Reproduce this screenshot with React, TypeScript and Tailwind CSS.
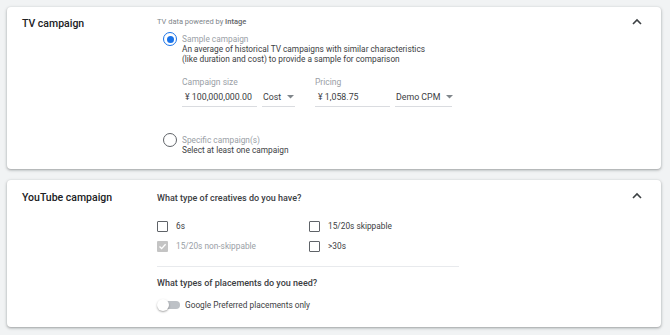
import React from 'react';

const font = { fontFamily: 'Roboto, "Liberation Sans", sans-serif' };

function ChevronUp() {
  return (
    <svg width="10" height="7" viewBox="0 0 10 7" className="mt-[1px]">
      <path d="M1 6 L5 2 L9 6" fill="none" stroke="#3c4043" strokeWidth="1.6" />
    </svg>
  );
}

function Radio({ checked }: { checked?: boolean }) {
  return (
    <span
      className={
        'flex h-[14px] w-[14px] shrink-0 items-center justify-center rounded-full border-[1.5px] ' +
        (checked ? 'border-[#1a73e8]' : 'border-[#5f6368]')
      }
    >
      {checked && <span className="h-[7px] w-[7px] rounded-full bg-[#1a73e8]" />}
    </span>
  );
}

function Caret() {
  return (
    <svg width="7" height="4" viewBox="0 0 7 4" className="shrink-0">
      <path d="M0 0 L7 0 L3.5 3.5 Z" fill="#80868b" />
    </svg>
  );
}

function Field({ value, width }: { value: string; width: string }) {
  return (
    <div className={'whitespace-nowrap border-b border-[#dadce0] pb-[4px] pl-[3px] text-[8.8px] leading-[10px] text-[#3c4043] ' + width}>
      {value}
    </div>
  );
}

function Select({ value, width }: { value: string; width: string }) {
  return (
    <div
      className={
        'flex items-center gap-[6px] whitespace-nowrap border-b border-[#dadce0] pb-[4px] pl-[1px] text-[8.8px] leading-[10px] text-[#3c4043] ' +
        width
      }
    >
      <span>{value}</span>
      <Caret />
    </div>
  );
}

function Checkbox({ label, checked, disabled }: { label: string; checked?: boolean; disabled?: boolean }) {
  return (
    <div className="flex h-[14px] items-center gap-[8px]">
      {checked ? (
        <span className="flex h-[11px] w-[11px] items-center justify-center rounded-[1px] bg-[#c4c4c4]">
          <svg width="9" height="9" viewBox="0 0 9 9">
            <path d="M1.5 4.6 L3.6 6.6 L7.6 2.2" fill="none" stroke="#fff" strokeWidth="1.4" />
          </svg>
        </span>
      ) : (
        <span className="h-[11px] w-[11px] rounded-[1px] border-[1.5px] border-[#5f6368]" />
      )}
      <span className={'text-[8.3px] leading-[10px] ' + (disabled ? 'text-[#9aa0a6]' : 'text-[#3c4043]')}>{label}</span>
    </div>
  );
}

export default function App() {
  return (
    <div className="flex h-[335px] w-[670px] flex-col gap-[11px] bg-[#f1f3f4] px-[7px] pt-[7px]" style={font}>
      {/* TV campaign */}
      <div className="flex w-[654px] rounded-[4px] bg-white pb-[14px] pl-[15px] pr-[19px] pt-[10px] shadow-[0_1px_2px_rgba(60,64,67,0.3),0_1px_3px_1px_rgba(60,64,67,0.15)]">
        <div className="w-[135px] shrink-0 text-[10.5px] font-medium leading-[14px] text-[#202124]">TV campaign</div>
        <div className="flex-1">
          <div className="text-[7.5px] leading-[10px] text-[#80868b]">
            TV data powered by <span className="font-medium text-[#5f6368]">Intage</span>
          </div>
          <div className="mt-[7px] flex gap-[5px] pl-[6px]">
            <div className="-mt-[2px]">
              <Radio checked />
            </div>
            <div className="text-[8.3px] leading-[10px]">
              <div className="text-[#9aa0a6]">Sample campaign</div>
              <div className="text-[#3c4043]">An average of historical TV campaigns with similar characteristics</div>
              <div className="text-[#3c4043]">(like duration and cost) to provide a sample for comparison</div>
              <div className="mt-[13px] flex">
                <div className="w-[133px]">
                  <div className="text-[8.5px] leading-[10px] text-[#9aa0a6]">Campaign size</div>
                  <div className="mt-[5px] flex gap-[5px]">
                    <Field value="¥ 100,000,000.00" width="w-[75px]" />
                    <Select value="Cost" width="w-[33px]" />
                  </div>
                </div>
                <div>
                  <div className="text-[8.5px] leading-[10px] text-[#9aa0a6]">Pricing</div>
                  <div className="mt-[5px] flex gap-[5px]">
                    <Field value="¥ 1,058.75" width="w-[75px]" />
                    <Select value="Demo CPM" width="w-[57px]" />
                  </div>
                </div>
              </div>
            </div>
          </div>
          <div className="mt-[28px] flex gap-[5px] pl-[6px]">
            <div className="-mt-[2px]">
              <Radio />
            </div>
            <div className="text-[8.3px] leading-[10px]">
              <div className="text-[#9aa0a6]">Specific campaign(s)</div>
              <div className="text-[#3c4043]">Select at least one campaign</div>
            </div>
          </div>
        </div>
        <ChevronUp />
      </div>

      {/* YouTube campaign */}
      <div className="flex w-[654px] rounded-[4px] bg-white pb-[15px] pl-[15px] pr-[19px] pt-[11px] shadow-[0_1px_2px_rgba(60,64,67,0.3),0_1px_3px_1px_rgba(60,64,67,0.15)]">
        <div className="w-[135px] shrink-0 text-[10.5px] font-medium leading-[14px] text-[#202124]">YouTube campaign</div>
        <div className="flex-1">
          <div className="mt-[1px] text-[9px] font-medium leading-[12px] text-[#3c4043]">What type of creatives do you have?</div>
          <div className="mt-[15px] grid w-[302px] grid-cols-[152px_1fr] gap-y-[6px]">
            <Checkbox label="6s" />
            <Checkbox label="15/20s skippable" />
            <Checkbox label="15/20s non-skippable" checked disabled />
            <Checkbox label=">30s" />
          </div>
          <div className="mt-[13px] w-[302px] border-t border-[#e8eaed]" />
          <div className="mt-[10px] text-[9px] font-medium leading-[12px] text-[#3c4043]">What types of placements do you need?</div>
          <div className="mt-[9px] flex h-[14px] items-center gap-[5px]">
            <div className="relative h-[14px] w-[23px]">
              <div className="absolute left-[3px] top-[3px] h-[8px] w-[20px] rounded-full bg-[#bdc1c6]" />
              <div className="absolute left-0 top-[1px] h-[12px] w-[12px] rounded-full bg-white shadow-[0_1px_2px_rgba(0,0,0,0.35)]" />
            </div>
            <span className="text-[8.3px] leading-[10px] text-[#3c4043]">Google Preferred placements only</span>
          </div>
        </div>
        <ChevronUp />
      </div>
    </div>
  );
}
